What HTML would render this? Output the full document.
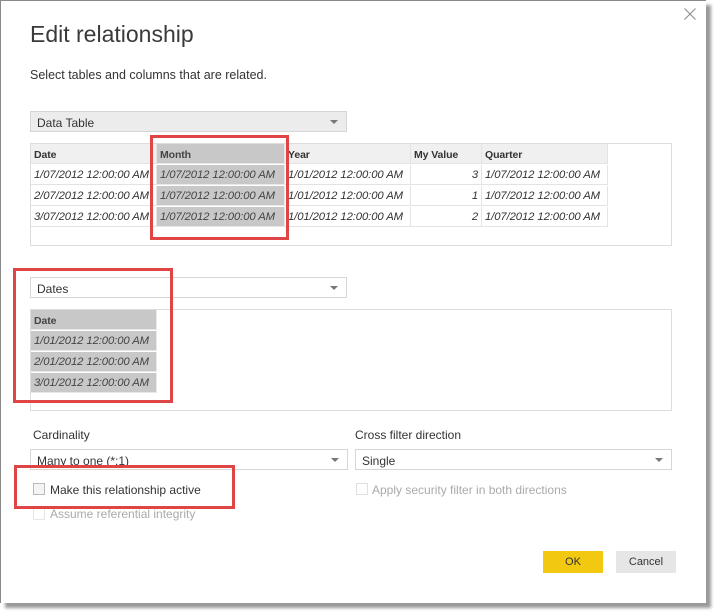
<!DOCTYPE html>
<html><head><style>
*{margin:0;padding:0;box-sizing:border-box}
body{width:720px;height:616px;background:#fff;position:relative;overflow:hidden;font-family:"Liberation Sans",sans-serif;color:#333}
.a{position:absolute}
.dlg{left:0;top:0;width:706px;height:603px;border:1px solid #8a8a8a;border-right:none;border-bottom:none;box-shadow:5px 5px 3px #9a9a9a;background:#fff}
.dd{position:absolute;height:21px;border:1px solid #d6d6d6;font-size:12px;padding:4px 6px 0;color:#333}
.dd:after{content:"";position:absolute;right:8px;top:8px;border:4px solid transparent;border-top:4px solid #777}
.box{position:absolute;border:1px solid #ddd}
.c{position:absolute;height:20px;font-size:11.3px;font-style:italic;padding:4px 3px;white-space:nowrap;overflow:hidden;border-right:1px solid #e3e3e3;border-bottom:1px solid #e3e3e3;color:#333;letter-spacing:-0.1px}
.h{font-style:normal;font-weight:bold;background:#f0f0f0;font-size:10.5px;padding-top:5px}
.g{background:#c8c8c8;border-color:#e8e8e8;color:#444}
.r{text-align:right}
.red{position:absolute;border:3px solid #e04545}
.lbl{position:absolute;font-size:12px;color:#333}
.cb{position:absolute;width:12px;height:12px;border:1px solid #bbb;background:#f4f4f4}
</style></head><body>
<div class="a dlg"></div>
<svg class="a" style="left:684px;top:8px" width="12" height="12"><path d="M0.5 0.5L11.5 11.5M11.5 0.5L0.5 11.5" stroke="#888" stroke-width="1"/></svg>
<div class="a" style="left:30px;top:21px;font-size:23px;color:#3a3a3a">Edit relationship</div>
<div class="lbl" style="left:30px;top:68px;font-size:12.5px">Select tables and columns that are related.</div>

<div class="dd" style="left:30px;top:111px;width:317px;background:#ececec">Data Table</div>
<div class="box" style="left:30px;top:143px;width:642px;height:103px"></div>
<div class="c h" style="left:31px;top:144px;width:126px">Date</div>
<div class="c h g" style="left:157px;top:144px;width:128px">Month</div>
<div class="c h" style="left:285px;top:144px;width:126px">Year</div>
<div class="c h" style="left:411px;top:144px;width:71px">My Value</div>
<div class="c h" style="left:482px;top:144px;width:126px">Quarter</div>

<div class="c" style="left:31px;top:165px;width:126px">1/07/2012 12:00:00 AM</div>
<div class="c g" style="left:157px;top:165px;width:128px">1/07/2012 12:00:00 AM</div>
<div class="c" style="left:285px;top:165px;width:126px">1/01/2012 12:00:00 AM</div>
<div class="c r" style="left:411px;top:165px;width:71px">3</div>
<div class="c" style="left:482px;top:165px;width:126px">1/07/2012 12:00:00 AM</div>

<div class="c" style="left:31px;top:186px;width:126px">2/07/2012 12:00:00 AM</div>
<div class="c g" style="left:157px;top:186px;width:128px">1/07/2012 12:00:00 AM</div>
<div class="c" style="left:285px;top:186px;width:126px">1/01/2012 12:00:00 AM</div>
<div class="c r" style="left:411px;top:186px;width:71px">1</div>
<div class="c" style="left:482px;top:186px;width:126px">1/07/2012 12:00:00 AM</div>

<div class="c" style="left:31px;top:207px;width:126px">3/07/2012 12:00:00 AM</div>
<div class="c g" style="left:157px;top:207px;width:128px">1/07/2012 12:00:00 AM</div>
<div class="c" style="left:285px;top:207px;width:126px">1/01/2012 12:00:00 AM</div>
<div class="c r" style="left:411px;top:207px;width:71px">2</div>
<div class="c" style="left:482px;top:207px;width:126px">1/07/2012 12:00:00 AM</div>
<div class="red" style="left:150px;top:135px;width:139px;height:105px"></div>

<div class="dd" style="left:30px;top:277px;width:317px;background:#fff">Dates</div>
<div class="box" style="left:30px;top:309px;width:642px;height:102px"></div>
<div class="c h g" style="left:31px;top:310px;width:126px">Date</div>
<div class="c g" style="left:31px;top:331px;width:126px">1/01/2012 12:00:00 AM</div>
<div class="c g" style="left:31px;top:352px;width:126px">2/01/2012 12:00:00 AM</div>
<div class="c g" style="left:31px;top:373px;width:126px">3/01/2012 12:00:00 AM</div>
<div class="red" style="left:13px;top:268px;width:160px;height:135px"></div>

<div class="lbl" style="left:33px;top:428px">Cardinality</div>
<div class="dd" style="left:30px;top:449px;width:318px">Many to one (*:1)</div>
<div class="lbl" style="left:355px;top:428px">Cross filter direction</div>
<div class="dd" style="left:355px;top:449px;width:317px">Single</div>

<div class="cb" style="left:33px;top:483px"></div>
<div class="lbl" style="left:50px;top:483px">Make this relationship active</div>
<div class="cb" style="left:33px;top:508px;border-color:#e6e6e6;background:#fff"></div>
<div class="lbl" style="left:50px;top:507px;color:#aaa">Assume referential integrity</div>
<div class="red" style="left:14px;top:465px;width:221px;height:44px"></div>
<div class="cb" style="left:356px;top:483px;border-color:#e0e0e0;background:#fff"></div>
<div class="lbl" style="left:372px;top:483px;color:#aaa">Apply security filter in both directions</div>

<div class="a" style="left:543px;top:551px;width:60px;height:22px;background:#f2c811;font-size:11px;text-align:center;line-height:22px;color:#333">OK</div>
<div class="a" style="left:616px;top:551px;width:60px;height:22px;background:#e6e6e6;font-size:11px;text-align:center;line-height:22px;color:#333">Cancel</div>
</body></html>
